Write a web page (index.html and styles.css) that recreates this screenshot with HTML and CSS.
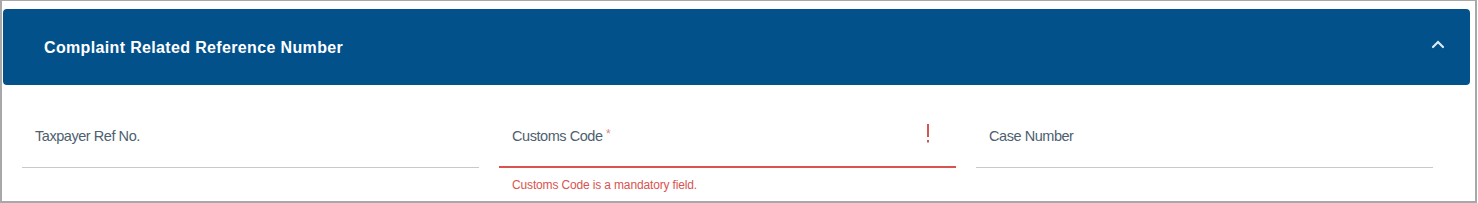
FILE: index.html
```html
<!DOCTYPE html>
<html lang="en">
<head>
    <meta charset="UTF-8">
    <title>Complaint Related Reference Number</title>
    <link rel="stylesheet" href="styles.css">
</head>
<body>
    <div class="panel">
        <!-- Collapsible header -->
        <div class="panel-header">
            <span class="panel-title">Complaint Related Reference Number</span>
            <svg class="chevron" width="14" height="10" viewBox="0 0 14 10">
                <path d="M2,8 L7,3 L12,8" fill="none" stroke="#dbeaf6" stroke-width="2.2" stroke-linecap="round"/>
            </svg>
        </div>
        <!-- Fields -->
        <div class="panel-body">
            <div class="field">
                <div class="field-input">
                    <span class="field-label">Taxpayer Ref No.</span>
                </div>
            </div>
            <div class="field invalid">
                <div class="field-input">
                    <span class="field-label">Customs Code <span class="req">*</span></span>
                    <svg class="alert" width="6" height="22" viewBox="0 0 6 22">
                        <rect x="2" y="1" width="2" height="13" fill="#d9534f"/>
                        <rect x="2" y="17" width="2" height="2.5" fill="#d9534f"/>
                    </svg>
                </div>
                <div class="field-error">Customs Code is a mandatory field.</div>
            </div>
            <div class="field">
                <div class="field-input">
                    <span class="field-label">Case Number</span>
                </div>
            </div>
        </div>
    </div>
</body>
</html>
```

FILE: styles.css
```css
body {
    margin: 0;
    background: #fff;
    font-family: "Liberation Sans", Arial, sans-serif;
}
.panel {
    box-sizing: border-box;
    height: 203px;
    width: 1477px;
    border: 2px solid #a8a8a8;
    border-top-width: 1px;
    padding: 8px 5px 0 1px;
}
.panel-header {
    display: flex;
    align-items: center;
    justify-content: space-between;
    height: 76px;
    padding: 0 25px 0 41px;
    background: #02518b;
    border-radius: 4px;
}
.panel-title {
    color: #fff;
    font-size: 16px;
    font-weight: bold;
    letter-spacing: 0.35px;
    margin-top: 2px;
}
.chevron {
    margin-top: -6px;
}
.panel-body {
    display: grid;
    grid-template-columns: repeat(3, 457px);
    column-gap: 20px;
    padding: 0 0 0 19px;
}
.field-input {
    display: flex;
    align-items: center;
    justify-content: space-between;
    height: 82px;
    padding: 0 25px 0 13px;
    border-bottom: 1px solid #c9c9c9;
}
.field-label {
    color: #4d5f70;
    font-size: 14.5px;
    letter-spacing: -0.45px;
    margin-top: 20px;
}
.req {
    color: #d98884;
    font-size: 12px;
    vertical-align: 3px;
}
.alert {
    margin-top: 16px;
}
.invalid .field-input {
    border-bottom: 2px solid #d9534f;
    height: 81px;
}
.field-error {
    color: #d9534f;
    font-size: 12px;
    letter-spacing: -0.15px;
    padding: 10px 0 0 13px;
}
```
